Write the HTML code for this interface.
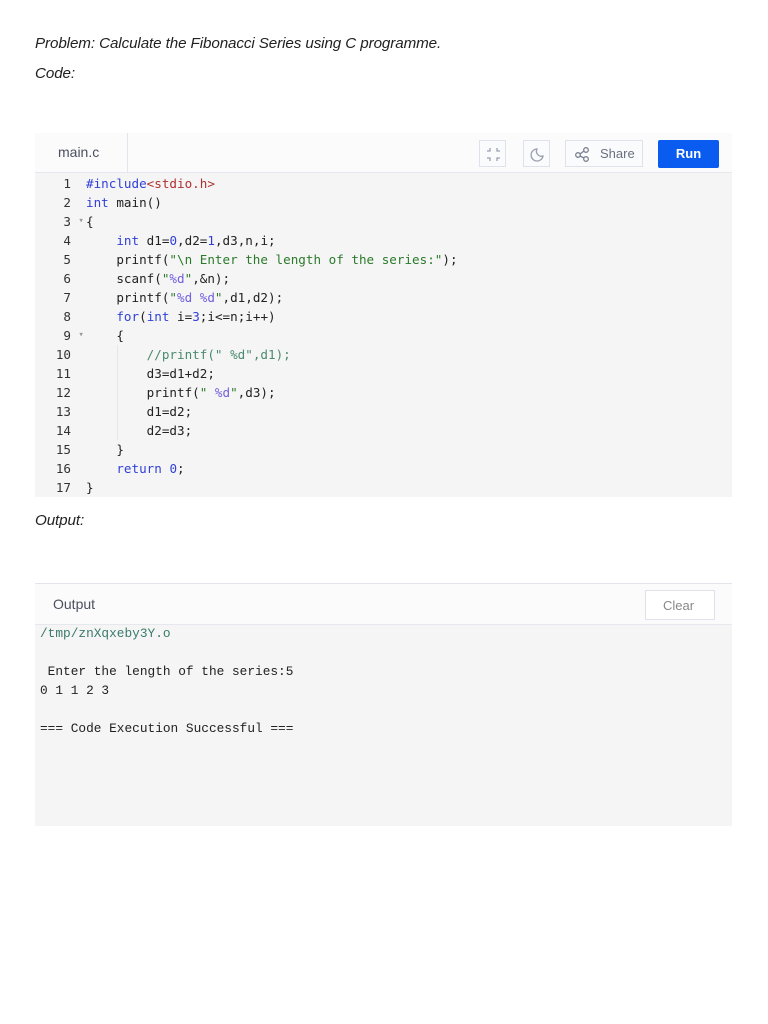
<!DOCTYPE html>
<html><head><meta charset="utf-8"><style>
body{margin:0;width:768px;height:1024px;background:#fff;position:relative;overflow:hidden;font-family:"Liberation Sans",sans-serif}
.hw{position:absolute;left:35px;font-style:italic;font-size:15.2px;color:#222;letter-spacing:-0.1px}
.panel{position:absolute;left:35px;width:697px;background:#f5f5f5}
.hdr{position:absolute;left:0;top:0;right:0;background:#fbfbfc;border-bottom:1px solid #e6e8ee}
.code{position:absolute;font-family:"DejaVu Sans Mono",monospace;font-size:12.6px;white-space:pre;line-height:19px;color:#222}
.ln{position:absolute;left:0;width:36px;text-align:right;font-family:"DejaVu Sans Mono",monospace;font-size:12.6px;line-height:19px;color:#333;white-space:pre}
.k{color:#2f3fd8}.s{color:#2a7a2a}.p{color:#7060e0}.r{color:#b03030}.c{color:#4a8a70}
.btn{position:absolute;border:1px solid #dfe2ea;background:#fafbfc;box-sizing:border-box}
</style></head><body>
<div class="hw" style="top:35px">Problem: Calculate the Fibonacci Series using C programme.</div>
<div class="hw" style="top:65px">Code:</div>
<div class="panel" style="top:133px;height:364px">
 <div class="hdr" style="height:39px">
  <div style="position:absolute;left:0;top:0;width:92px;height:39px;border-right:1px solid #e3e5ea;background:#fbfbfc"></div>
  <div style="position:absolute;left:23px;top:11px;font-size:14px;color:#4a5060">main.c</div>
  <div class="btn" style="left:444px;top:7px;width:27px;height:27px"><svg width="27" height="27" viewBox="0 0 27 27" fill="none" stroke="#9aa0ae" stroke-width="1.3"><path d="M10 7v3H7M17 7v3h3M10 20v-3H7M17 20v-3h3"/></svg></div>
  <div class="btn" style="left:488px;top:7px;width:27px;height:27px"><svg width="27" height="27" viewBox="0 0 27 27" fill="none" stroke="#9aa0ae" stroke-width="1.3"><path d="M13 8a6 6 0 1 0 6 7a5 5 0 0 1-6-7z"/></svg></div>
  <div class="btn" style="left:530px;top:7px;width:78px;height:27px"><svg style="position:absolute;left:8px;top:5px" width="17" height="17" viewBox="0 0 17 17" fill="none" stroke="#7a8090" stroke-width="1.3"><circle cx="4" cy="9" r="2.3"/><circle cx="12" cy="4" r="2.3"/><circle cx="12" cy="13" r="2.3"/><path d="M6 8l4-3M6 10l4 2"/></svg><span style="position:absolute;left:34px;top:5px;font-size:13px;color:#6a7080">Share</span></div>
  <div style="position:absolute;left:623px;top:7px;width:61px;height:28px;background:#0a5cf0;border-radius:2px;color:#fff;font-weight:bold;font-size:13px;text-align:center;line-height:28px">Run</div>
 </div>
 <div class="ln" style="top:41px">1
2
3
4
5
6
7
8
9
10
11
12
13
14
15
16
17</div>
 <div class="code" style="left:38px;top:41px;color:#999;font-size:9px;line-height:19px">

 ▾





 ▾</div>
 <div style="position:absolute;left:82px;top:212px;height:95px;border-left:1px solid #e6e6e6"></div>
 <div class="code" style="left:51px;top:41px"><span class="k">#include</span><span class="r">&lt;stdio.h&gt;</span>
<span class="k">int</span> main()
{
    <span class="k">int</span> d1=<span class="k">0</span>,d2=<span class="k">1</span>,d3,n,i;
    printf(<span class="s">"\n Enter the length of the series:"</span>);
    scanf(<span class="s">"</span><span class="p">%d</span><span class="s">"</span>,&amp;n);
    printf(<span class="s">"</span><span class="p">%d %d</span><span class="s">"</span>,d1,d2);
    <span class="k">for</span>(<span class="k">int</span> i=<span class="k">3</span>;i&lt;=n;i++)
    {
        <span class="c">//printf(" %d",d1);</span>
        d3=d1+d2;
        printf(<span class="s">" </span><span class="p">%d</span><span class="s">"</span>,d3);
        d1=d2;
        d2=d3;
    }
    <span class="k">return</span> <span class="k">0</span>;
}</div>
</div>
<div class="hw" style="top:512px">Output:</div>
<div class="panel" style="top:583px;height:242px;border-top:1px solid #e3e5ea">
 <div class="hdr" style="height:40px">
  <div style="position:absolute;left:18px;top:12px;font-size:14px;color:#4a5060">Output</div>
  <div class="btn" style="left:610px;top:6px;width:70px;height:30px;background:#fff"><span style="position:absolute;left:17px;top:7px;font-size:13px;color:#888">Clear</span></div>
 </div>
 <div class="code" style="left:5px;top:40px;font-family:'Liberation Mono','DejaVu Sans Mono',monospace;font-size:12.8px"><span style="color:#3a7a6a">/tmp/znXqxeby3Y.o</span>

 Enter the length of the series:5
0 1 1 2 3

=== Code Execution Successful ===</div>
</div>
</body></html>
